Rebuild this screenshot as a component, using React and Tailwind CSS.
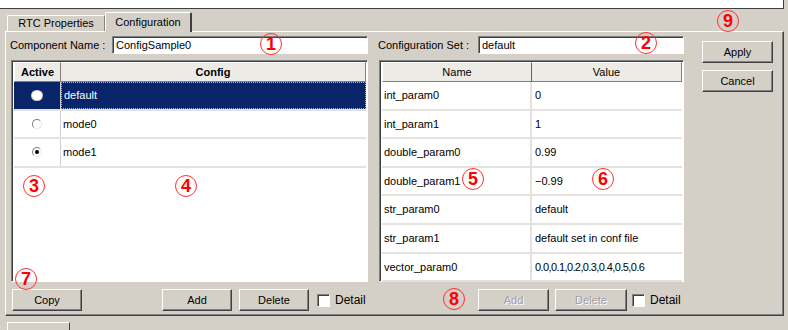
import React from "react";

const raised =
  "bg-[#d4d0c8] border border-t-white border-l-white border-r-[#404040] border-b-[#404040] shadow-[inset_-1px_-1px_0_#808080]";
const sunken =
  "bg-white border border-t-[#808080] border-l-[#808080] border-r-white border-b-white shadow-[inset_1px_1px_0_#404040]";

function Btn({ children, w, disabled }) {
  return (
    <div className={`${raised} ${w} h-[22px] flex items-center justify-center`}>
      <span className={disabled ? "text-[#a0a0a0] [text-shadow:1px_1px_0_#ffffff]" : "text-black"}>{children}</span>
    </div>
  );
}

function Check() {
  return <div className={`${sunken} w-[13px] h-[13px]`} />;
}

function Radio({ checked, selected }) {
  if (selected) {
    return <div className="w-[10px] h-[9px] rounded-full bg-white shadow-[0_0_0_1px_#c8c8d0]" />;
  }
  return (
    <div className="w-[10px] h-[10px] rounded-full bg-white border border-t-[#808080] border-l-[#808080] border-r-[#e8e8e8] border-b-[#e8e8e8] flex items-center justify-center">
      {checked && <div className="w-[4px] h-[4px] rounded-full bg-black" />}
    </div>
  );
}

const configs = [
  { name: "default", selected: true },
  { name: "mode0" },
  { name: "mode1", checked: true },
];

const params = [
  ["int_param0", "0"],
  ["int_param1", "1"],
  ["double_param0", "0.99"],
  ["double_param1", "\u22120.99"],
  ["str_param0", "default"],
  ["str_param1", "default set in conf file"],
  ["vector_param0", "0.0,0.1,0.2,0.3,0.4,0.5,0.6"],
];

function Mark({ n, pos }) {
  return (
    <span
      className={`absolute ${pos} w-[22px] h-[22px] rounded-full border border-[#ff3030] text-[#ff0000] font-bold text-[18px] leading-none flex items-center justify-center`}
    >
      {n}
    </span>
  );
}

export default function App() {
  return (
    <div className="relative w-[788px] h-[330px] overflow-hidden bg-[#d4d0c8] text-[11px] text-black font-['Liberation_Sans',Arial,sans-serif]">
      {/* strip of the panel above */}
      <div className="w-[784px] h-[9px] bg-white border-b border-r border-[#404040]" />

      {/* tabs */}
      <div className="flex items-end h-[22px] pl-[7px]">
        <div className="w-[98px] h-[16px] flex items-center justify-center border-t border-l border-white border-r border-r-[#808080] rounded-tl-[2px]">
          RTC Properties
        </div>
        <div className="relative z-10 w-[87px] h-[20px] -mb-[1px] flex items-center justify-center bg-[#d4d0c8] border-t border-l border-white border-r-2 border-r-[#404040] rounded-t-[2px]">
          Configuration
        </div>
      </div>

      {/* tab panel */}
      <div className="ml-[5px] w-[779px] h-[285px] border border-t-white border-l-white border-r-[#404040] border-b-[#404040] shadow-[inset_-1px_-1px_0_#808080] flex pl-[4px] pt-[4px]">
        {/* configuration sets */}
        <div className="w-[358px] flex flex-col">
          <div className="h-[18px] flex items-center">
            <span className="w-[102px]">Component Name :</span>
            <div className={`${sunken} flex-1 h-[18px] flex items-center pl-[3px]`}>ConfigSample0</div>
          </div>
          <div className={`${sunken} mt-[6px] ml-[1px] w-[357px] h-[222px] p-[1px] pl-[2px]`}>
            <div className="flex h-[20px]">
              <div className="w-[47px] flex items-center justify-center font-bold bg-[#ecebe6] border-t border-l border-white border-r border-b border-r-[#808080] border-b-[#808080]">
                Active
              </div>
              <div className="flex-1 flex items-center justify-center font-bold bg-[#ecebe6] border-t border-white border-r border-b border-r-[#808080] border-b-[#808080]">
                Config
              </div>
            </div>
            {configs.map((c) => (
              <div
                key={c.name}
                className={`flex h-[28.5px] border-b-2 border-[#e4e2de] ${c.selected ? "bg-[#0a246a] text-white" : ""}`}
              >
                <div className="w-[47px] flex items-center justify-center border-r border-[#d4d0c8]">
                  <Radio checked={c.checked} selected={c.selected} />
                </div>
                <div
                  className={`flex-1 flex items-center pl-[2px] ${c.selected ? "border border-dotted border-[#b0b8d8]" : ""}`}
                >
                  {c.name}
                </div>
              </div>
            ))}
          </div>
          <div className="mt-[7px] h-[22px] flex items-center">
            <div className="ml-[2px]">
              <Btn w="w-[70px]">Copy</Btn>
            </div>
            <div className="ml-[80px]">
              <Btn w="w-[70px]">Add</Btn>
            </div>
            <div className="ml-[7px]">
              <Btn w="w-[70px]">Delete</Btn>
            </div>
            <div className="ml-[8px]">
              <Check />
            </div>
            <span className="ml-[5px] text-[12px]">Detail</span>
          </div>
        </div>

        {/* parameters */}
        <div className="ml-[10px] w-[306px] flex flex-col">
          <div className="h-[18px] flex items-center">
            <span className="w-[100px]">Configuration Set :</span>
            <div className={`${sunken} flex-1 h-[18px] flex items-center pl-[3px]`}>default</div>
          </div>
          <div className={`${sunken} mt-[6px] ml-[1px] w-[305px] h-[222px] p-[1px] pl-[2px]`}>
            <div className="flex h-[20px]">
              <div className="w-[150px] flex items-center justify-center bg-[#ecebe6] border-t border-l border-white border-r border-b border-r-[#606060] border-b-[#808080]">
                Name
              </div>
              <div className="flex-1 flex items-center justify-center bg-[#ecebe6] border-t border-white border-r border-b border-r-[#808080] border-b-[#808080]">
                Value
              </div>
            </div>
            {params.map(([n, v]) => (
              <div key={n} className="flex h-[28.6px] border-b-2 border-[#e4e2de]">
                <div className="w-[150px] flex items-center pl-[2px] border-r-2 border-[#e4e2de]">{n}</div>
                <div className={`flex-1 flex items-center pl-[3px] ${n === "vector_param0" ? "tracking-[-0.6px]" : ""}`}>{v}</div>
              </div>
            ))}
          </div>
          <div className="mt-[7px] h-[22px] flex items-center">
            <div className="ml-[100px]">
              <Btn w="w-[71px]" disabled>
                Add
              </Btn>
            </div>
            <div className="ml-[6px]">
              <Btn w="w-[72px]" disabled>
                Delete
              </Btn>
            </div>
            <div className="ml-[5px]">
              <Check />
            </div>
            <span className="ml-[5px] text-[12px]">Detail</span>
          </div>
        </div>

        {/* apply / cancel */}
        <div className="ml-[18px] pt-[5px] flex flex-col gap-[7px]">
          <Btn w="w-[71px]">Apply</Btn>
          <Btn w="w-[71px]">Cancel</Btn>
        </div>
      </div>

      {/* tab stub of the lower panel */}
      <div className="mt-[6px] ml-[7px] w-[63px] h-[10px] border-t border-l border-white border-r border-r-[#404040]" />

      <Mark n="1" pos="left-[260px] top-[33px]" />
      <Mark n="2" pos="left-[635px] top-[32px]" />
      <Mark n="9" pos="left-[717px] top-[10px]" />
      <Mark n="3" pos="left-[23px] top-[175px]" />
      <Mark n="4" pos="left-[175px] top-[175px]" />
      <Mark n="5" pos="left-[462px] top-[168px]" />
      <Mark n="6" pos="left-[592px] top-[168px]" />
      <Mark n="7" pos="left-[15px] top-[268px]" />
      <Mark n="8" pos="left-[443px] top-[288px]" />
    </div>
  );
}
